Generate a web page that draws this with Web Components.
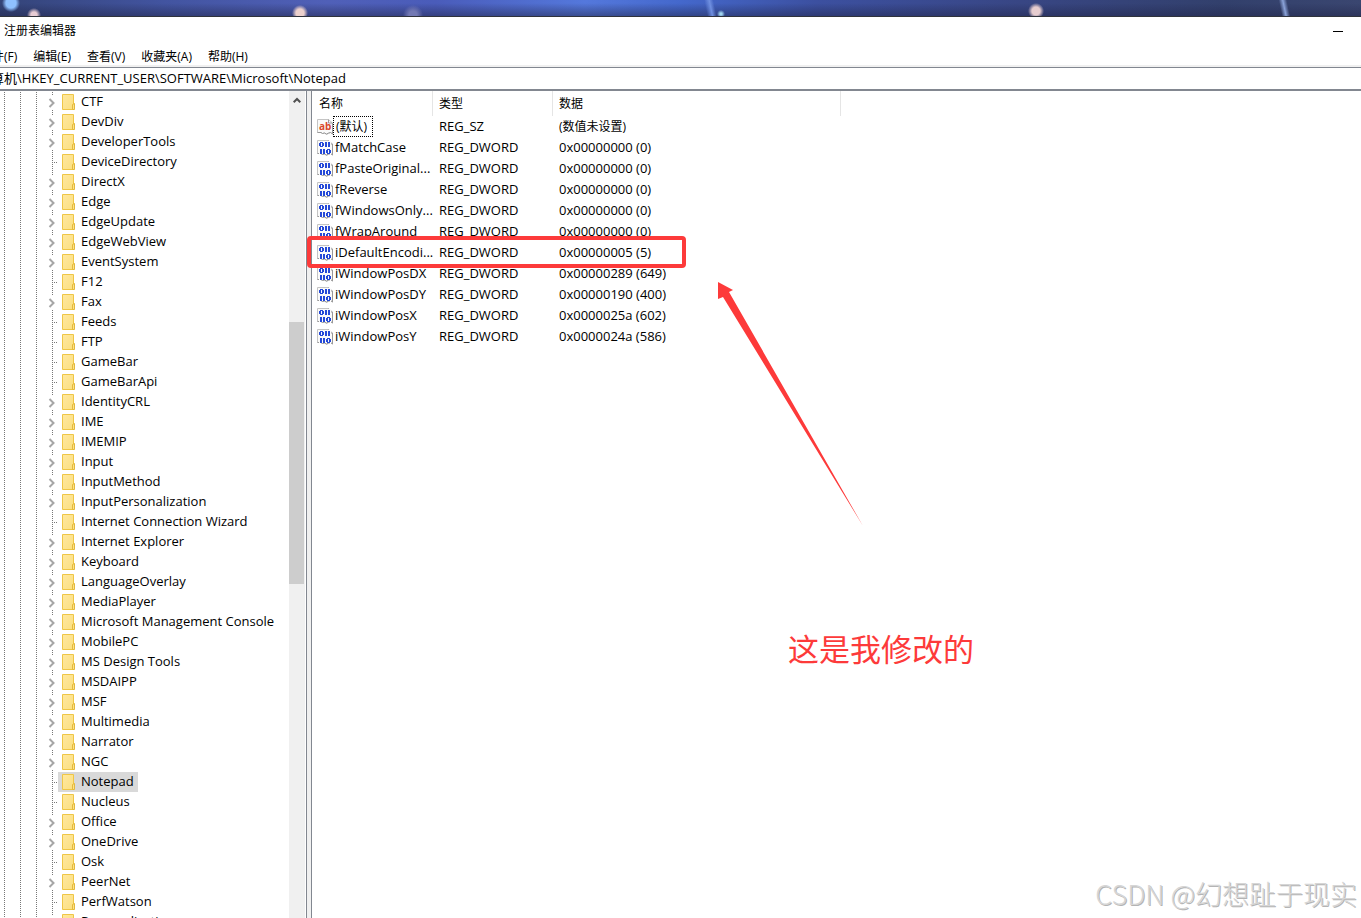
<!DOCTYPE html>
<html lang="zh-CN">
<head>
<meta charset="utf-8">
<title>注册表编辑器</title>
<style>
  html, body { height: 100%; margin: 0; }
  body {
    overflow: hidden;
    background: #fff;
    color: #000;
    font-family: "Open Sans", "Noto Sans CJK SC", sans-serif;
    font-size: 13px;
    --line: #828790;
    --face: #f0f0f0;
    --mark: #fd3a3a;
  }
</style>
</head>
<body>
<desktop-view></desktop-view>

<script>
const define = (name, html, setup) => {
  const template = document.createElement('template');
  template.innerHTML = html;
  customElements.define(name, class extends HTMLElement {
    connectedCallback() {
      if (this.shadowRoot) return;
      const root = this.attachShadow({ mode: 'open' });
      root.append(template.content.cloneNode(true));
      if (setup) setup(root, this);
    }
  });
};

/* Strip of wallpaper seen above the window */
define('wall-paper', `
<style>
  :host {
    display: block; flex: none; height: 16px; border-bottom: 1px solid #30333c;
    background:
      radial-gradient(circle at 11px 3px, #8fc0ff 0 5px, transparent 9px),
      radial-gradient(circle at 34px 15px, #e8ccd4 0 3px, transparent 7px),
      radial-gradient(circle at 300px 13px, #ecd0cc 0 4px, transparent 8px),
      radial-gradient(circle at 413px 15px, #7379b4 0 4px, transparent 10px),
      radial-gradient(circle at 721px 14px, #a0d4f0 0 1px, transparent 4px),
      radial-gradient(circle at 1036px 11px, #e6cccf 0 4px, transparent 8px),
      linear-gradient(78deg, transparent 692px, #6f8fe0 697px, transparent 701px),
      linear-gradient(78deg, transparent 1254px, #8aa2d8 1258px, transparent 1262px),
      linear-gradient(transparent 20%, rgba(32,36,72,.5)),
      linear-gradient(90deg, #344478, #4254a0 12%, #5060b8 24%, #4a5cba 32%, #5478dc 43%, #4468cc 50%, #3c50a0 60%, #384684 75%, #32406c 90%, #3a4670);
  }
</style>`);

define('title-bar', `
<style>
  :host { display: flex; flex: none; align-items: flex-start; height: 30px; padding-left: 26px; font-size: 12px; }
  h1 { flex: 1; margin: 0; font: inherit; line-height: 28px; }
  button { width: 46px; height: 28px; padding: 0; border: 0; background: none; }
  svg { display: block; margin: auto; }
</style>
<h1><slot></slot></h1>
<button type="button" aria-label="最小化"><svg width="10" height="10" viewBox="0 0 10 10"><path d="M0 5.5h10" stroke="#000"/></svg></button>`);

define('menu-bar', `
<style>
  :host { display: flex; flex: none; height: 18px; margin-left: -6px; border-bottom: 2px solid var(--face); }
  button { height: 20px; padding: 0 8px; border: 0; background: none; color: inherit; font: 12px/20px "Open Sans", "Noto Sans CJK SC", sans-serif; white-space: nowrap; }
</style>
<button type="button">文件(F)</button><button type="button">编辑(E)</button><button type="button">查看(V)</button><button type="button">收藏夹(A)</button><button type="button">帮助(H)</button>`);

define('address-bar', `
<style>
  :host { display: flex; flex: none; align-items: flex-start; height: 21px; border: solid var(--line); border-width: 1px 0; }
  input { flex: 1; height: 19px; border: 0; padding: 0; outline: 0; background: #fff; color: inherit; font: inherit; }
</style>
<input type="text" aria-label="地址" value="计算机\\HKEY_CURRENT_USER\\SOFTWARE\\Microsoft\\Notepad">`);

define('folder-icon', `
<style>:host { display: block; } svg { display: block; }</style>
<svg width="13" height="16" viewBox="0 0 13 16">
  <defs><linearGradient id="g" x1="0" y1="0" x2="1" y2="1"><stop stop-color="#ffe89f"/><stop offset="1" stop-color="#fbdf80"/></linearGradient></defs>
  <path d="M.5.5h11v15H.5z" fill="url(#g)" stroke="#efc646"/>
  <path d="M10.5 15.5v-5l2-1v6z" fill="#fde28a" stroke="#e3b93b"/>
</svg>`);

define('tree-node', `
<style>
  :host { display: flex; height: 20px; }
  .joint {
    flex: none; width: 14px; height: 20px;
    background: linear-gradient(#777 50%, transparent 50%) 8px 0 / 1px 2px repeat-y;
  }
  :host([leaf]) .joint {
    background: linear-gradient(#777 50%, transparent 50%) 8px 0 / 1px 2px repeat-y,
      linear-gradient(90deg, #777 50%, transparent 50%) 8px 10px / 2px 1px repeat-x;
    clip-path: inset(0 0 0 8px);
  }
  :host([leaf]) button { display: none; }
  button { display: block; width: 14px; height: 15px; margin: 3px 0 0; padding: 0; border: 0; background: #fff; }
  svg { display: block; margin: 0 0 0 4px; }
  .label { display: flex; align-items: flex-start; gap: 6px; height: 20px; padding: 0 4px; line-height: 18px; white-space: nowrap; }
  folder-icon { margin-top: 2px; }
  :host([selected]) .label { background: #d9d9d9; }
</style>
<span class="joint"><button type="button" aria-label="展开"><svg width="8" height="10" viewBox="0 0 8 10"><path d="M1.5 1l4 4-4 4" fill="none" stroke="#a6a6a6" stroke-width="2"/></svg></button></span>
<span class="label"><folder-icon></folder-icon><slot></slot></span>`,
(root, host) => { host.setAttribute('role', 'treeitem'); });

define('scroll-bar', `
<style>
  :host { display: flex; flex-direction: column; flex: none; width: 16px; background: var(--face); }
  button { flex: none; height: 17px; padding: 0; border: 0; background: none; }
  svg { display: block; margin: 1px auto 0 4px; }
  .before { flex: 214; }
  .thumb { flex: 262; margin-right: 1px; background: #cdcdcd; }
  .after { flex: 334; }
</style>
<button type="button" aria-label="向上滚动"><svg width="8" height="7" viewBox="0 0 8 7"><path d="M.7 5.3L4 2l3.300 3.300" fill="none" stroke="#505050" stroke-width="2"/></svg></button>
<div class="before"></div><div class="thumb"></div><div class="after"></div>`);

define('key-tree', `
<style>
  :host { display: flex; flex: none; width: 327px; padding-right: 1px; border-right: 1px solid var(--line); overflow: hidden; }
  .nodes {
    flex: 1; min-width: 0; margin-top: 1px; padding-left: 66px; overflow: hidden;
    background:
      linear-gradient(#777 50%, transparent 50%) 26px 0 / 1px 2px repeat-y,
      linear-gradient(#777 50%, transparent 50%) 42px 0 / 1px 2px repeat-y,
      linear-gradient(#777 50%, transparent 50%) 58px 0 / 1px 2px repeat-y;
  }
</style>
<div class="nodes" role="tree"></div>
<scroll-bar></scroll-bar>`,
root => {
  /* A trailing "-" marks a key with no subkeys */
  const keys = `CTF|DevDiv|DeveloperTools|DeviceDirectory-|DirectX|Edge|EdgeUpdate|EdgeWebView|EventSystem|F12-|Fax|Feeds-|FTP-|GameBar-|GameBarApi-|IdentityCRL|IME|IMEMIP|Input|InputMethod|InputPersonalization|Internet Connection Wizard-|Internet Explorer|Keyboard|LanguageOverlay|MediaPlayer|Microsoft Management Console|MobilePC|MS Design Tools|MSDAIPP|MSF|Multimedia|Narrator|NGC|Notepad-|Nucleus-|Office|OneDrive|Osk-|PeerNet|PerfWatson-|Personalization`;
  for (const key of keys.split('|')) {
    const node = document.createElement('tree-node');
    node.textContent = key.replace('-', '');
    node.toggleAttribute('leaf', key.endsWith('-'));
    node.toggleAttribute('selected', key === 'Notepad-');
    root.querySelector('.nodes').append(node);
  }
});

define('value-icon', `
<style>
  :host { display: block; flex: none; }
  svg { display: block; }
  .string { display: none; }
  :host([kind="REG_SZ"]) .string { display: inline; }
  :host([kind="REG_SZ"]) .binary { display: none; }
  text { font: bold 10px "Open Sans", sans-serif; }
</style>
<svg width="16" height="16" viewBox="0 0 16 16" fill="none">
  <path d="M.5.5h11l4 3.500v11l-2-1.500-2 1-2 1-2-1.500-2 .5-1.500-1H.5z" fill="#fafafa" stroke="#c4c4c4"/>
  <path d="M11.500.5v3.500h4v11" stroke="#999"/>
  <path d="M.5 13.500H4l1.500 1 2-.5 2 1 2-1 2-.5 2 1.500" stroke="#999"/>
  <g class="binary" shape-rendering="crispEdges" fill="#2449d8">
    <path d="M2 1h12v13H2z" fill="#fafafa"/>
    <path d="M3 2h3v1H3zM3 6h3v1H3zM2 3h2v3H2zM5 3h2v3H5z"/>
    <path d="M8 2h2v5H8zM11 2h2v5h-2zM3 9h2v5H3zM6 9h2v5H6z"/>
    <path d="M10 9h3v1h-3zM10 13h3v1h-3zM9 10h2v3H9zM12 10h2v3h-2z"/>
  </g>
  <text class="string" x="2" y="11" fill="#d9482b">ab</text>
</svg>`);

define('value-list', `
<style>
  :host { display: block; flex: 1; min-width: 0; border-left: 1px solid var(--line); background: #fff; }
  table { border-collapse: separate; border-spacing: 0; table-layout: fixed; width: 529px; }
  .name { width: 121px; } .type { width: 120px; } .data { width: 288px; }
  th, td { box-sizing: border-box; padding: 0 0 0 6px; text-align: left; font-weight: normal; white-space: nowrap; }
  th { height: 25px; border-right: 1px solid #e5e5e5; font-size: 12px; line-height: 24px; }
  th:first-child { padding-left: 7px; }
  td { height: 21px; line-height: 21px; }
  td:first-child { padding-left: 5px; }
  .cell { display: flex; align-items: center; gap: 2px; height: 21px; }
  .han { font-size: 12px; }
  .focus { margin-left: -2px; padding: 0 5px 0 2px; border: 1px dotted #000; line-height: 19px; }
</style>
<table>
  <colgroup><col class="name"><col class="type"><col class="data"></colgroup>
  <thead><tr><th scope="col">名称</th><th scope="col">类型</th><th scope="col">数据</th></tr></thead>
  <tbody></tbody>
</table>`,
root => {
  const values = [
    ['(默认)', 'REG_SZ', '(数值未设置)'],
    ['fMatchCase', 'REG_DWORD', '0x00000000 (0)'],
    ['fPasteOriginal...', 'REG_DWORD', '0x00000000 (0)'],
    ['fReverse', 'REG_DWORD', '0x00000000 (0)'],
    ['fWindowsOnly...', 'REG_DWORD', '0x00000000 (0)'],
    ['fWrapAround', 'REG_DWORD', '0x00000000 (0)'],
    ['iDefaultEncodi...', 'REG_DWORD', '0x00000005 (5)'],
    ['iWindowPosDX', 'REG_DWORD', '0x00000289 (649)'],
    ['iWindowPosDY', 'REG_DWORD', '0x00000190 (400)'],
    ['iWindowPosX', 'REG_DWORD', '0x0000025a (602)'],
    ['iWindowPosY', 'REG_DWORD', '0x0000024a (586)'],
  ];
  root.querySelector('tbody').innerHTML = values.map(([name, type, data], i) => `
    <tr><td><div class="cell"><value-icon kind="${type}"></value-icon><span class="${i ? '' : 'han focus'}">${name}</span></div></td>
    <td>${type}</td><td class="${i ? '' : 'han'}">${data}</td></tr>`).join('');
});

/* Window whose left edge lies beyond the screen */
define('registry-window', `
<style>
  :host { display: flex; flex: 1; flex-direction: column; min-height: 0; margin-left: -22px; background: #fff; }
  .panes { display: flex; flex: 1; min-height: 0; border-top: 1px solid var(--line); }
  .splitter { flex: none; width: 4px; background: var(--face); }
</style>
<title-bar>注册表编辑器</title-bar>
<menu-bar></menu-bar>
<address-bar></address-bar>
<div class="panes"><key-tree></key-tree><div class="splitter"></div><value-list></value-list></div>`);

/* Hand-made notes laid over the window */
define('note-layer', `
<style>
  :host { position: absolute; inset: 0; pointer-events: none; }
  .frame { position: absolute; left: 307px; top: 236px; width: 371px; height: 24px; border: 4px solid var(--mark); border-radius: 4px; }
  svg { position: absolute; left: 718px; top: 282px; }
  .note { position: absolute; left: 788px; top: 628px; margin: 0; color: var(--mark); font: 31px/40px "Noto Sans CJK SC", sans-serif; white-space: nowrap; }
  .credit { position: absolute; right: 4px; bottom: 5px; margin: 0; color: #d6d6d6; font: 27px/38px "Noto Sans CJK SC", sans-serif; font-weight: 300; text-shadow: 1px 1px #b4b4b4; white-space: nowrap; }
</style>
<div class="frame"></div>
<svg width="146" height="244" viewBox="0 0 146 244"><path d="M0 0l15 8-4 2L145 244 5 15l-5 2z" fill="#fd3a3a"/></svg>
<p class="note">这是我修改的</p>
<p class="credit">CSDN @幻想趾于现实</p>`);

define('desktop-view', `
<style>:host { position: relative; display: flex; flex-direction: column; height: 100vh; overflow: hidden; }</style>
<wall-paper></wall-paper>
<registry-window></registry-window>
<note-layer></note-layer>`);
</script>
</body>
</html>
